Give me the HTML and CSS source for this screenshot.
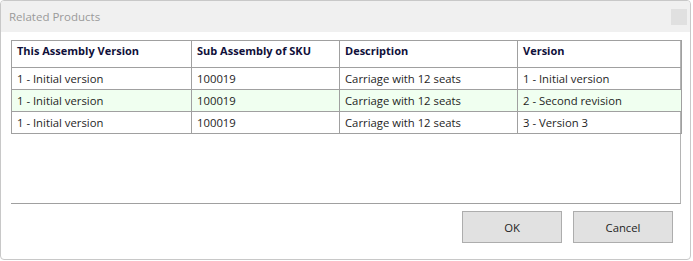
FILE: index.html
```html
<!DOCTYPE html>
<html>
<head>
<meta charset="utf-8" />
<title>Related Products</title>
<link rel="stylesheet" href="styles.css">
</head>
<body>
<div class="dialog">
  <div class="titlebar">
    <span class="title">Related Products</span>
    <div class="close"></div>
  </div>
  <div class="content">
    <div class="grid">
      <table>
        <thead>
          <tr>
            <th class="c1">This Assembly Version</th>
            <th class="c2">Sub Assembly of SKU</th>
            <th class="c3">Description</th>
            <th class="c4">Version</th>
          </tr>
        </thead>
        <tbody>
          <tr>
            <td>1 - Initial version</td>
            <td>100019</td>
            <td>Carriage with 12 seats</td>
            <td>1 - Initial version</td>
          </tr>
          <tr class="alt">
            <td>1 - Initial version</td>
            <td>100019</td>
            <td>Carriage with 12 seats</td>
            <td>2 - Second revision</td>
          </tr>
          <tr>
            <td>1 - Initial version</td>
            <td>100019</td>
            <td>Carriage with 12 seats</td>
            <td>3 - Version 3</td>
          </tr>
        </tbody>
      </table>
    </div>
    <div class="buttons">
      <button class="btn">OK</button>
      <button class="btn">Cancel</button>
    </div>
  </div>
</div>
</body>
</html>
```

FILE: styles.css
```css
*{ padding:0; margin:0; box-sizing:border-box;}
body{ background:#fff; font-family:"Open Sans","Noto Sans",sans-serif; font-size:11.3px; color:#1e1e1e;}
.dialog{
  width:691px;
  height:260px;
  border:1px solid #c8c8c8;
  border-radius:4px;
  background:#fff;
  display:flex;
  flex-direction:column;
  overflow:hidden;
}
.titlebar{
  height:31px;
  background:#f0f0f0;
  display:flex;
  align-items:center;
  justify-content:space-between;
  padding:0 3px 0 8px;
}
.title{ color:#9a9a9a; font-size:11.5px;}
.close{ width:16px; height:16px; background:#e0e0e0; margin-top:1px;}
.content{ flex:1; padding:8px 9px 0 10px; display:flex; flex-direction:column;}
.grid{ height:164px; border:1px solid #a0a0a0; border-top:none; border-left:none; border-right:1px solid #b4b4b4;}
table{ width:671px; border-collapse:collapse; table-layout:fixed;}
th,td{ border:1px solid #a0a0a0; text-align:left; padding:0 5px; white-space:nowrap; overflow:hidden;}
th{ height:27px; font-weight:bold; color:#10103a; font-size:11px; vertical-align:top; padding-top:2px;}
td{ height:22px;}
th.c1{ width:180px;}
th.c2{ width:148px;}
th.c3{ width:178px;}
tr.alt td{ background:#f0fff0;}
.buttons{ display:flex; justify-content:flex-end; gap:11px; padding:7px 8px 0 0;}
.btn{
  width:100px;
  height:32px;
  background:#e1e1e1;
  border:1px solid #adadad;
  font-family:inherit;
  font-size:11.3px;
  color:#1e1e1e;
}
```
